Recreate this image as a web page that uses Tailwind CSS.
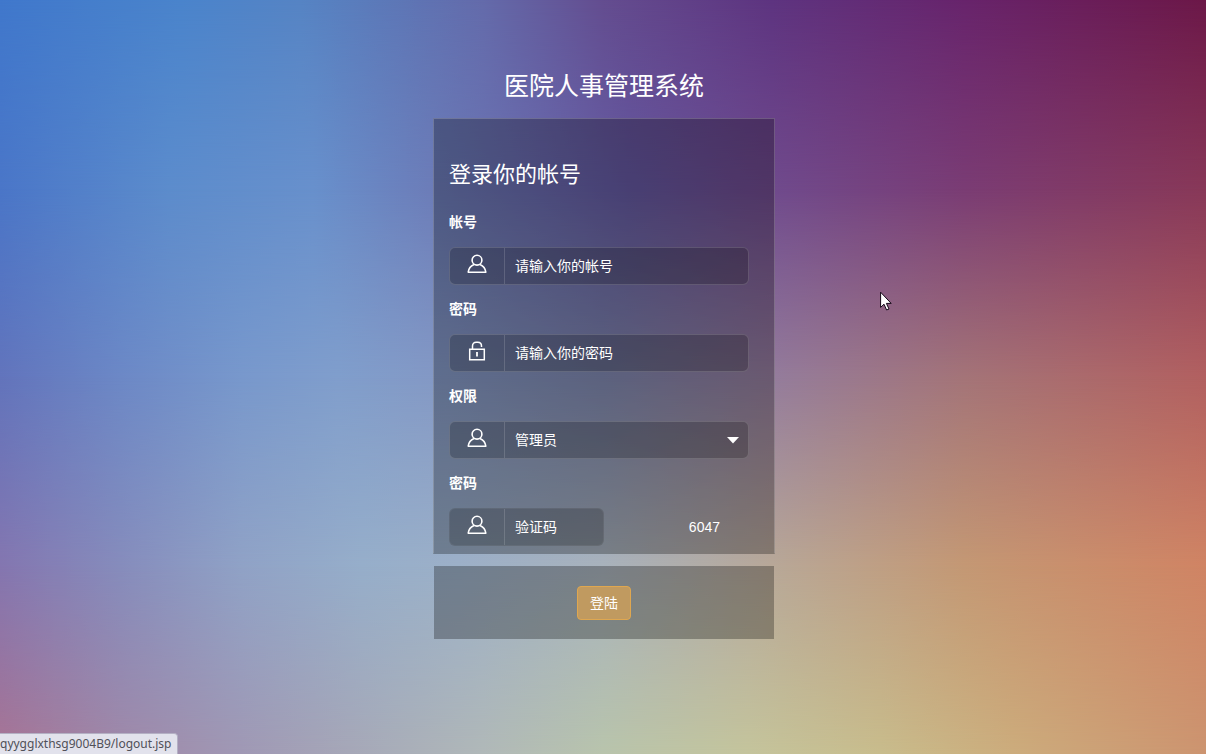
<!DOCTYPE html>
<html lang="zh-CN">
<head>
<meta charset="utf-8">
<title>医院人事管理系统</title>
<script src="https://cdn.jsdelivr.net/npm/@tailwindcss/browser@4"></script>
</head>
<body class="relative min-h-screen overflow-x-hidden bg-[#7c8cb8] font-['Liberation_Sans','Noto_Sans_CJK_SC',sans-serif] text-sm text-white">

<!-- Colour mesh: each band is a horizontal gradient that fades in over the one above -->
<div class="absolute inset-0" aria-hidden="true">
  <div class="absolute inset-0 bg-[linear-gradient(90deg,#4078cc_0%,#4a84cc_15%,#5684c4_25%,#646bab_40%,#644d90_50%,#5e3480_64%,#68246c_80%,#6c1848_100%)]"></div>
  <div class="absolute inset-0 bg-[linear-gradient(90deg,#4a76c8_0%,#5c8ccc_14%,#6890cc_26%,#6c7cb8_36%,#6868ac_45%,#6458a0_52%,#6e4c90_62%,#7a3c74_80%,#883858_100%)] mask-[linear-gradient(180deg,transparent_0%,black_25%)]"></div>
  <div class="absolute inset-0 bg-[linear-gradient(90deg,#6274bc_0%,#6c88c6_10%,#7898cc_20%,#809ecc_28%,#8498c4_37%,#8088b0_50%,#947c9c_64%,#a47478_80%,#b26060_100%)] mask-[linear-gradient(180deg,transparent_25%,black_50%)]"></div>
  <div class="absolute inset-0 bg-[linear-gradient(90deg,#8476b0_0%,#868cbc_10%,#90a2c6_20%,#96aeca_30%,#9cb0c8_38%,#a8b2bc_50%,#b8a898_64%,#c49874_80%,#d08464_100%)] mask-[linear-gradient(180deg,transparent_50%,black_75%)]"></div>
  <div class="absolute inset-0 bg-[linear-gradient(90deg,#a87494_0%,#a088a8_10%,#a098b4_20%,#a8acb8_32%,#b0b8b8_40%,#b8c4ac_50%,#c4c49c_62%,#c8bc8c_73%,#ccac7c_84%,#cc9470_100%)] mask-[linear-gradient(180deg,transparent_75%,black_100%)]"></div>
</div>

<svg class="hidden" aria-hidden="true">
  <symbol id="user" viewBox="0 0 20 20"><g fill="none" stroke="currentColor" stroke-width="1.6"><circle cx="10" cy="6.2" r="4.9"/><path d="M7 10.4C3.4 12 1.6 14.4 1.2 18.2H18.8C18.4 14.4 16.6 12 13 10.4" stroke-linejoin="round"/></g></symbol>
  <symbol id="lock" viewBox="0 0 20 20"><g fill="none" stroke="currentColor" stroke-width="1.5"><path d="M2.7 8.2H17.3V18.8H2.7Z"/><path d="M5.5 8V5C5.5 2.6 7 1.2 9.2 1.2H10.8C13 1.2 14.5 2.6 14.5 5V6"/><path d="M10 11V15.4" stroke-width="1.8"/></g></symbol>
</svg>

<main class="relative mx-auto w-full max-w-[344px] pt-[68px] pl-0.5">
  <h1 class="mb-[14px] text-center text-[25px] leading-9">医院人事管理系统</h1>
  <form>
    <div class="flex flex-col gap-[15px] border border-white/20 border-b-transparent bg-black/28 pt-10 pr-[25px] pb-[7px] pl-[15px]">
      <h2 class="mb-[7px] text-[22px] leading-8">登录你的帐号</h2>

      <label for="account" class="leading-[19px] font-bold">帐号</label>
      <div class="flex h-[38px] rounded-md border border-white/15 bg-black/20">
        <span class="flex w-[55px] justify-center border-r border-white/15 pt-[6px]"><svg class="size-5"><use href="#user"/></svg></span>
        <input id="account" type="text" placeholder="请输入你的帐号" class="min-w-0 flex-1 px-[10px] outline-none placeholder:text-white">
      </div>

      <label for="password" class="leading-[19px] font-bold">密码</label>
      <div class="flex h-[38px] rounded-md border border-white/15 bg-black/20">
        <span class="flex w-[55px] justify-center border-r border-white/15 pt-[6px]"><svg class="size-5"><use href="#lock"/></svg></span>
        <input id="password" type="password" placeholder="请输入你的密码" class="min-w-0 flex-1 px-[10px] outline-none placeholder:text-white">
      </div>

      <label for="role" class="leading-[19px] font-bold">权限</label>
      <div class="relative flex h-[38px] rounded-md border border-white/15 bg-black/20">
        <span class="flex w-[55px] justify-center border-r border-white/15 pt-[6px]"><svg class="size-5"><use href="#user"/></svg></span>
        <select id="role" class="min-w-0 flex-1 appearance-none px-[10px] outline-none">
          <option class="text-black">管理员</option>
        </select>
        <svg class="pointer-events-none absolute top-[15px] right-[9px] h-[7px] w-3" viewBox="0 0 12 7" fill="currentColor" aria-hidden="true"><path d="M0 0H12L6 6.5Z"/></svg>
      </div>

      <label for="captcha" class="leading-[19px] font-bold">密码</label>
      <div class="flex items-center justify-between pr-[29px]">
        <div class="flex h-[38px] w-[155px] rounded-md border border-white/5 bg-black/20">
          <span class="flex w-[55px] justify-center border-r border-white/15 pt-[6px]"><svg class="size-5"><use href="#user"/></svg></span>
          <input id="captcha" type="text" placeholder="验证码" class="min-w-0 flex-1 px-[10px] outline-none placeholder:text-white">
        </div>
        <output for="captcha">6047</output>
      </div>
    </div>

    <div class="mx-px mt-3 flex h-[73px] items-center justify-center bg-black/28">
      <button type="button" class="h-[34px] rounded border border-[#dfa750] bg-[#c09a60] px-3">登陆</button>
    </div>
  </form>
</main>

<svg class="pointer-events-none absolute top-[291px] left-[880px] h-5 w-3" viewBox="0 0 12 20" aria-hidden="true"><path d="M.6 1.2V16.4L4 13.2L6.6 19L9 18L6.4 12.4H11.2Z" fill="#fff" stroke="#140818" stroke-width="1"/></svg>

<div class="absolute bottom-0 left-0 h-[21px] rounded-tr border-t border-r border-[#b4b0c4] bg-[#e2e2ec] pr-[6px] font-['Noto_Sans','Open_Sans',sans-serif] text-xs leading-5 text-[#505058]">qyygglxthsg9004B9/logout.jsp</div>
</body>
</html>
